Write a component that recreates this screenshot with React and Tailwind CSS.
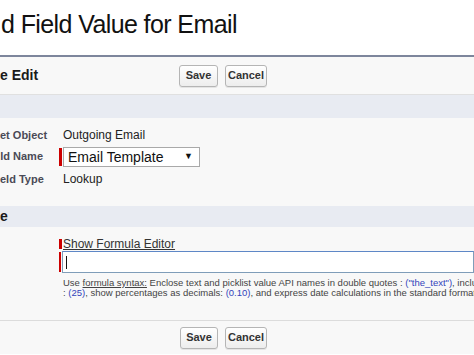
export default function App() {
  const font = { fontFamily: '"Liberation Sans", Arial, sans-serif' };
  const Btn = ({ children, w }) => (
    <button
      className={`h-[22px] ${w} rounded-[3px] border border-[#b5b5b5] bg-gradient-to-b from-white to-[#ededed] text-[11px] font-bold text-[#333] flex items-center justify-center shadow-[0_1px_0_rgba(0,0,0,0.08)]`}
    >
      {children}
    </button>
  );
  return (
    <div className="w-[474px] h-[355px] overflow-hidden bg-white text-[#333]" style={font}>
      <div className="h-[55px] pl-[1px] pt-[9px]">
        <div className="text-[25px] leading-[30px] tracking-[-0.6px] text-[#111] whitespace-nowrap">d Field Value for Email</div>
      </div>
      <div className="border-t-2 border-[#7d869c] bg-[#f8f8f8]">
        <div className="h-[38px] flex items-center border-b border-[#e0e0e0]">
          <div className="w-[179px] text-[14px] font-bold text-[#1a1a1a]">e Edit</div>
          <div className="flex gap-[7px]">
            <Btn w="w-[39px]">Save</Btn>
            <Btn w="w-[42px]">Cancel</Btn>
          </div>
        </div>
        <div className="h-[23px] bg-[#e8ebf2]"></div>
        <div className="pt-[9px] pb-[19px] flex flex-col gap-[4px]">
          <div className="h-[16px] flex items-center">
            <div className="w-[43px] text-right text-[11px] font-bold text-[#4a4a56] whitespace-nowrap">et Object</div>
            <div className="pl-[20px] text-[12px] text-[#222]">Outgoing Email</div>
          </div>
          <div className="h-[20px] flex">
            <div className="w-[43px] pt-[1px] text-right text-[11px] font-bold text-[#4a4a56] whitespace-nowrap">ld Name</div>
            <div className="ml-[16px] w-[3px] h-[18px] mt-[1px] bg-[#c00]"></div>
            <div className="ml-[1px] w-[137px] h-[20px] border border-[#a9a9a9] bg-white flex items-center pl-[4px] pr-[6px]">
              <span className="flex-1 text-[14px] text-[#111]">Email Template</span>
              <span className="text-[9px] text-[#111]">▼</span>
            </div>
          </div>
          <div className="h-[16px] flex items-center">
            <div className="w-[43px] text-right text-[11px] font-bold text-[#4a4a56] whitespace-nowrap">eld Type</div>
            <div className="pl-[20px] text-[12px] text-[#222]">Lookup</div>
          </div>
        </div>
        <div className="h-[21px] bg-[#e8ebf2] flex items-center">
          <span className="text-[14px] font-bold text-[#1a1a1a]">e</span>
        </div>
        <div className="pt-[11px] h-[94px] border-b border-[#dcdcdc]">
          <div className="flex h-[12px] items-end">
            <div className="ml-[59px] w-[3px] h-[10px] mb-[1px] bg-[#c00]"></div>
            <div className="ml-[1px] text-[12px] leading-[12px] text-[#333] underline whitespace-nowrap">Show Formula Editor</div>
          </div>
          <div className="flex mt-[1px]">
            <div className="ml-[59px] w-[3px] h-[20px] mt-[1px] bg-[#c00]"></div>
            <div className="ml-[1px] w-[500px] h-[22px] border border-[#7f9db9] border-t-[#5e87c6] bg-white flex items-center pl-[3px]">
              <div className="w-px h-[13px] bg-[#111]"></div>
            </div>
          </div>
          <div className="ml-[63px] mt-[5px] text-[9.5px] leading-[10px] text-[#444] whitespace-nowrap">
            <div>
              Use <span className="underline">formula syntax:</span> Enclose text and picklist value API names in double quotes : <span className="text-[#3344bb]">("the_text")</span>, include numbers without quotes
            </div>
            <div>
              : <span className="text-[#3344bb]">(25)</span>, show percentages as decimals: <span className="text-[#3344bb]">(0.10)</span>, and express date calculations in the standard format: <span className="text-[#3344bb]">(Today() + 7)</span>
            </div>
          </div>
        </div>
        <div className="h-[33px] flex items-center pl-[180px] gap-[7px]">
          <Btn w="w-[38px]">Save</Btn>
          <Btn w="w-[42px]">Cancel</Btn>
        </div>
      </div>
    </div>
  );
}
